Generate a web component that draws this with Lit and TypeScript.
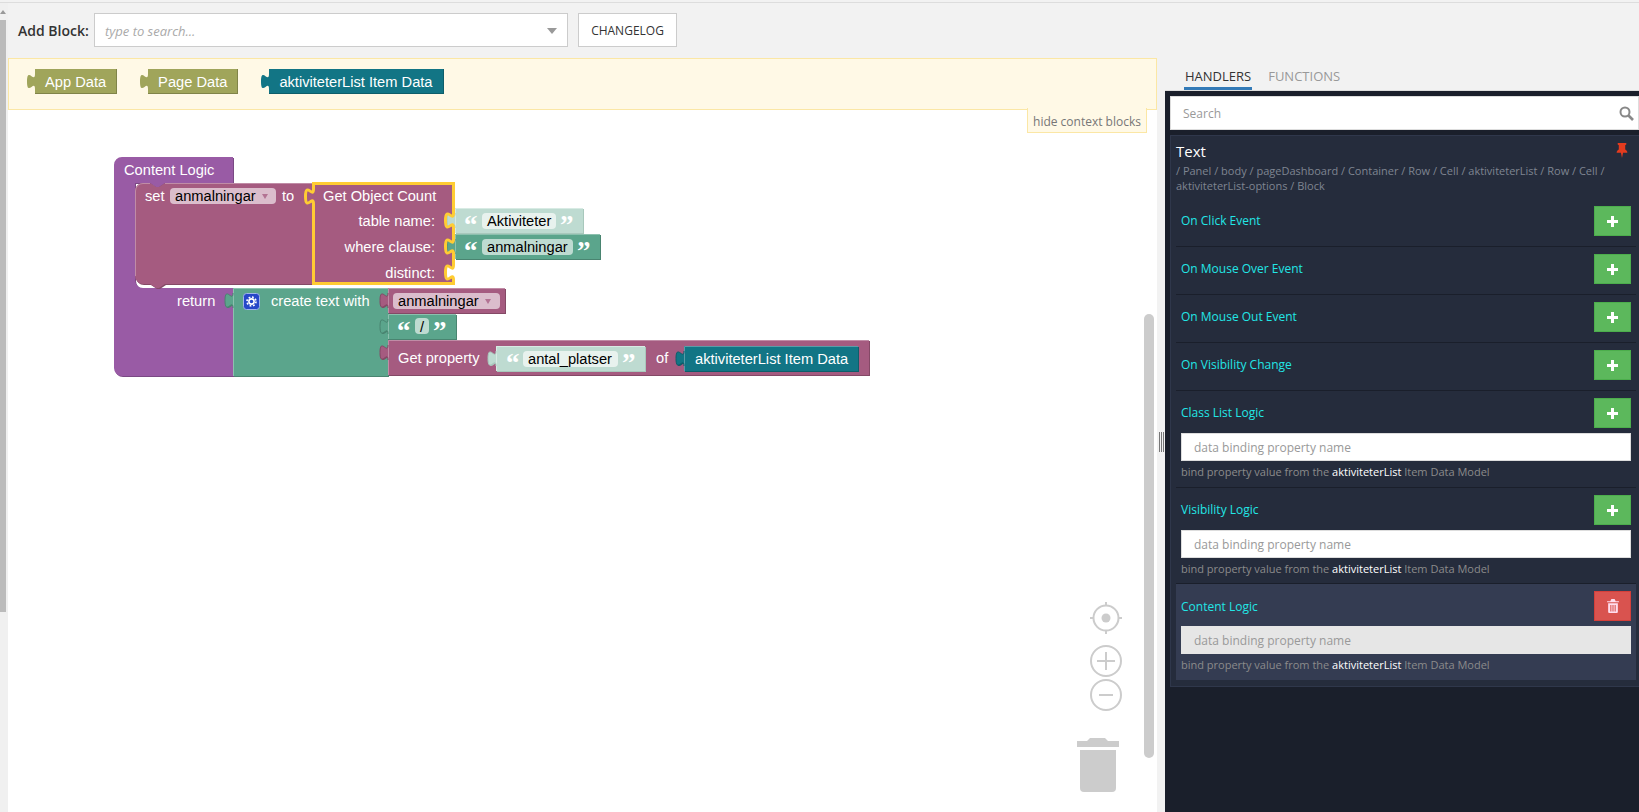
import { LitElement, html, svg, css } from "lit";
import { customElement } from "lit/decorators.js";

const C = {
  purple: "#995ba5", purpleD: "#7a4984",
  rose: "#a55b80", roseD: "#844966", roseL: "#c08ca6",
  green: "#5ba58c", greenD: "#498470", greenL: "#8cc0ae",
  pale: "#bedbd1", paleD: "#a8c8bc", paleL: "#d8ebe4",
  teal: "#127585", tealD: "#0e5e6a", tealL: "#5a9ca8",
};

type Shade = [string, string, string];
const ROSE: Shade = [C.rose, C.roseD, C.roseL];
const GREEN: Shade = [C.green, C.greenD, C.greenL];
const PALE: Shade = [C.pale, C.paleD, C.paleL];
const TEAL: Shade = [C.teal, C.tealD, C.tealL];

const tabDown = "v5 c0,10 -8,-8 -8,7.5 s8,-2.5 8,7.5";
const outPath = (x: number, y: number, w: number, h: number, inputs: number[] = []) =>
  `M${x},${y} H${x + w} ` +
  inputs.map((i) => `V${i} ${tabDown} `).join("") +
  `V${y + h} H${x} V${y + 20} c0,-10 -8,8 -8,-7.5 s8,2.5 8,-7.5 Z`;

const shape = (d: string, s: Shade, hl: string) => svg`
  <path d=${d} fill=${s[1]} transform="translate(1,1)"></path>
  <path d=${d} fill=${s[0]}></path>
  <path d=${hl} fill="none" stroke=${s[2]} stroke-width="1"></path>`;

const block = (x: number, y: number, w: number, h: number, s: Shade, inputs: number[] = []) => svg`
  ${shape(outPath(x, y, w, h, inputs), s, `M${x + 0.5},${y + h} V${y + 0.5} H${x + w}`)}
  <path d="M${x},${y + 20} c0,-10 -8,8 -8,-7.5 s8,2.5 8,-7.5" fill="none" stroke=${s[1]} stroke-width="1"></path>`;

const t = (x: number, y: number, s: string, cls = "w") => svg`<text x=${x} y=${y} class=${cls}>${s}</text>`;

const chip = (x: number, y: number, w: number, fill: string) =>
  svg`<rect x=${x} y=${y} width=${w} height="16" rx="4" fill=${fill}></rect>`;

const quotes = (x1: number, x2: number, base: number) => svg`
  <text x=${x1} y=${base} class="q">“</text>
  <text x=${x2} y=${base} class="q">”</text>`;

const arrow = (cx: number, cy: number) =>
  svg`<path d="M${cx - 3},${cy - 2} h6 l-3,5 z" fill=${C.rose} opacity="0.75"></path>`;

const purplePath =
  "M114,165 a8,8 0 0 1 8,-8 H233 V183 H165 l-6,4 -3,0 -6,-4 H135 V280 a8,8 0 0 0 8,8 H233 V376 H122 a8,8 0 0 1 -8,-8 Z";
const setPath =
  "M143,183 H150 l6,4 3,0 6,-4 H312 V284 H165 l-6,4 -3,0 -6,-4 H143 a8,8 0 0 1 -8,-8 V191 a8,8 0 0 1 8,-8 Z";
const getCountPath = `M313.5,183.5 H453.5 V208 ${tabDown} V234 ${tabDown} V260 ${tabDown} V283.5 H313.5 V204 c0,-10 -8,8 -8,-7.5 s8,2.5 8,-7.5 Z`;

const workspace = svg`
  <path d=${purplePath} fill=${C.purpleD} transform="translate(1,1)"></path>
  <path d=${purplePath} fill=${C.purple}></path>
  ${t(124, 175, "Content Logic")}
  ${t(177, 306, "return")}

  ${shape(setPath, ROSE, "M135.5,276 V191 a7.5,7.5 0 0 1 7.5,-7.5 H150 M165,183.5 H312")}
  ${t(145, 201, "set")}
  ${chip(170, 188, 106, "#dbbdcc")}
  ${t(175, 201, "anmalningar", "k")}
  ${arrow(265, 196)}
  ${t(282, 201, "to")}

  ${block(233, 288, 155, 88, GREEN, [288, 314, 340])}
  <rect x="243.5" y="293.5" width="16" height="16" rx="3" fill="#2648c8" stroke="#9fb4ea"></rect>
  <circle cx="251.5" cy="301.5" r="2.6" fill="none" stroke="#fff" stroke-width="1.6"></circle>
  <circle cx="251.5" cy="301.5" r="4.5" fill="none" stroke="#fff" stroke-width="1.6" stroke-dasharray="1.8 1.73"></circle>
  ${t(271, 306, "create text with")}

  ${block(388, 288, 117, 25, ROSE)}
  ${chip(393, 293, 107, "#dbbdcc")}
  ${t(398, 306, "anmalningar", "k")}
  ${arrow(488, 301)}

  ${block(388, 314, 68, 25, GREEN)}
  ${quotes(397, 433, 340)}
  ${chip(415, 318, 14, C.pale)}
  ${t(420, 332, "/", "k")}

  ${block(388, 340, 481, 35, ROSE)}
  ${t(398, 363, "Get property")}
  ${block(496, 346, 149, 25, PALE)}
  ${quotes(506, 622, 372)}
  ${chip(523, 351, 95, "#e8f2ee")}
  ${t(528, 364, "antal_platser", "k")}
  ${t(656, 363, "of")}
  ${block(684, 346, 174, 25, TEAL)}
  ${t(695, 364, "aktiviteterList Item Data")}

  ${block(455, 208, 128, 25, PALE)}
  ${quotes(464, 560, 234)}
  ${chip(482, 213, 74, "#e8f2ee")}
  ${t(487, 226, "Aktiviteter", "k")}

  ${block(455, 234, 145, 25, GREEN)}
  ${quotes(464, 577, 260)}
  ${chip(482, 239, 91, C.pale)}
  ${t(487, 252, "anmalningar", "k")}

  <path d=${getCountPath} fill=${C.rose} stroke="#fc3" stroke-width="3"></path>
  ${t(323, 201, "Get Object Count")}
  ${t(435, 226, "table name:", "w e")}
  ${t(435, 252, "where clause:", "w e")}
  ${t(435, 278, "distinct:", "w e")}

  <g fill="none" stroke="#ccc" stroke-width="2">
    <circle cx="1106" cy="618" r="12.5"></circle>
    <path d="M1106,602 v4 M1106,630 v4 M1090,618 h4 M1118,618 h4"></path>
    <circle cx="1106" cy="661" r="15"></circle>
    <path d="M1097,661 h18 M1106,652 v18"></path>
    <circle cx="1106" cy="695" r="15"></circle>
    <path d="M1099,695 h14"></path>
  </g>
  <circle cx="1106" cy="618" r="4.5" fill="#ccc"></circle>
  <path d="M1077,741 H1087 L1090,738 H1105 L1108,741 H1119 V747 H1077 Z" fill="#ccc"></path>
  <path d="M1080,750 H1116 V788 a4,4 0 0 1 -4,4 H1084 a4,4 0 0 1 -4,-4 Z" fill="#ccc"></path>
`;

const tabChip = "M8,20 c0,-10 -8,8 -8,-7.5 s8,2.5 8,-7.5 z";

@customElement("app-root")
export class AppRoot extends LitElement {
  static styles = css`
    :host { display: block; height: 100vh; overflow: hidden; background: #f2f2f2; font-family: "Open Sans", sans-serif; }
    * { box-sizing: border-box; }
    .page { height: 100%; border-top: 1px solid #ddd; margin-top: 2px; display: grid; grid-template-columns: 8px 1149px 8px 1fr; }
    .vtrack { background: #f0f0f0; display: flex; flex-direction: column; align-items: flex-start; }
    .vtrack .up { width: 6px; height: 17px; display: flex; align-items: center; justify-content: center; }
    .vtrack .thumb { width: 6px; height: 592px; background: #bbb; }
    .editor { display: flex; flex-direction: column; min-height: 0; }
    .toolbar { height: 55px; flex: none; display: flex; align-items: flex-start; padding: 10px 0 0 10px; }
    .add { width: 76px; flex: none; font-size: 14px; font-weight: 600; color: #333; line-height: 36px; }
    .select { width: 474px; height: 34px; background: #fff; border: 1px solid #ccc; display: flex; align-items: center; justify-content: space-between; padding: 1px 10px 0; margin-right: 10px; }
    .select em { font-size: 13px; color: #aaa; }
    .caret { width: 0; height: 0; border-left: 5px solid transparent; border-right: 5px solid transparent; border-top: 6px solid #999; }
    .btn { width: 99px; height: 34px; background: #fff; border: 1px solid #ccc; font-size: 12px; color: #333; display: flex; align-items: center; justify-content: center; }
    .band { height: 52px; flex: none; position: relative; z-index: 1; background: #fff9e6; border: 1px solid #fbe7a5; display: flex; gap: 31px; padding: 10px 0 0 26px; }
    .hide { position: absolute; top: 100%; right: 9px; margin-top: -1px; width: 120px; height: 25px; padding-top: 3px; background: #fff9e6; border: 1px solid #fbe7a5; border-top: 0; font-size: 12px; color: #777; display: flex; align-items: center; justify-content: center; }
    .cb { position: relative; height: 25px; padding: 0 10px; color: #fff; font: 14.67px/27px "Liberation Sans", Arial, sans-serif; white-space: nowrap; border-right: 1px solid; border-bottom: 1px solid; }
    .cb svg { position: absolute; left: -8px; top: 0; overflow: visible; }
    .cb.olive { background: #a0a55b; border-color: #808449; }
    .cb.teal { background: #127585; border-color: #0e5e6a; }
    .canvas { flex: 1; position: relative; background: #fff; min-height: 0; overflow: hidden; }
    .canvas svg { display: block; }
    .canvas text { font: 14.67px "Liberation Sans", Arial, sans-serif; }
    .canvas text.w { fill: #fff; }
    .canvas text.k { fill: #000; }
    .canvas text.e { text-anchor: end; }
    .canvas text.q { font: bold 27px "Liberation Serif", serif; fill: #fff; }
    .vbar { position: absolute; right: 3px; top: 204px; width: 10px; height: 444px; border-radius: 5px; background: #ccc; }
    .gutter { display: flex; justify-content: center; padding-top: 429px; }
    .grip { width: 5px; height: 20px; background: repeating-linear-gradient(90deg, #777 0 1px, transparent 1px 2px); }
    .right { display: flex; flex-direction: column; min-width: 0; min-height: 0; overflow: hidden; }
    .tabs { height: 87px; flex: none; display: flex; gap: 15px; padding: 63px 0 0 19px; font-size: 13px; }
    .tab { height: 24px; padding: 0 1px; color: #999; line-height: 20px; }
    .tab.on { color: #333; border-bottom: 3px solid #337ab7; }
    .panel { flex: 1; background: #1a1f2b; border-top: 1px solid #ddd; padding: 5px 0 0 5px; min-height: 0; }
    .search { height: 34px; background: #fff; border: 1px solid #ddd; display: flex; align-items: center; justify-content: space-between; padding: 0 4px 0 12px; font-size: 12px; color: #999; }
    .card { width: 472px; margin-top: 5px; background: #252c3c; border: 1px solid #2f374b; padding: 4px 5px 6px; }
    .title { display: flex; justify-content: space-between; align-items: center; height: 21px; padding-right: 8px; color: #fff; font-size: 15px; }
    .path { font-size: 11px; line-height: 15px; color: #7f8591; margin-top: 2px; height: 36px; width: 440px; }
    .row { padding: 7px 5px 10px; border-bottom: 1px solid #1a1f2b; }
    .row.inp { padding-bottom: 6px; }
    .row.flush { padding-bottom: 5px; border-bottom: 0; }
    .row.sel { background: #343c52; border-top: 1px solid #1a1f2b; border-bottom: 0; padding-bottom: 6px; }
    .head { display: flex; justify-content: space-between; align-items: center; height: 30px; font-size: 12px; color: #22e6e6; }
    .row:not(.sel) .head span { margin-top: -2px; }
    .act { width: 37px; height: 30px; display: flex; align-items: center; justify-content: center; border: 1px solid #4cae4c; background: #5cb85c; }
    .act.del { border-color: #d43f3a; background: #d9534f; }
    .field { height: 28px; margin-top: 5px; background: #fff; border: 1px solid #ddd; font-size: 12px; color: #999; display: flex; align-items: center; padding-left: 12px; }
    .field.off { background: #e6e6e6; border-color: #e6e6e6; }
    .help { height: 18px; margin-top: 2px; font-size: 11px; line-height: 18px; color: #8b8b8b; white-space: nowrap; }
    .help b { font-weight: 400; color: #fff; }
  `;

  private plus() {
    return html`<svg width="11" height="11" viewBox="0 0 11 11"><path d="M4,0 h3 v4 h4 v3 h-4 v4 h-3 v-4 h-4 v-3 h4 z" fill="#fff"></path></svg>`;
  }

  private trash() {
    return html`<svg width="12" height="14" viewBox="0 0 11 13">
      <path d="M0,2 H3 L4,0 H7 L8,2 H11 V3 H0 Z" fill="#fde"></path>
      <path d="M1,4 H10 V12 a1,1 0 0 1 -1,1 H2 a1,1 0 0 1 -1,-1 Z M3,5.5 V11.5 H4 V5.5 Z M5,5.5 V11.5 H6 V5.5 Z M7,5.5 V11.5 H8 V5.5 Z" fill="#fde" fill-rule="evenodd"></path>
    </svg>`;
  }

  private row(label: string, cls = "", del = false) {
    const withInput = cls !== "";
    return html`<div class="row ${cls}">
      <div class="head"><span>${label}</span>
        <div class="act ${del ? "del" : ""}">${del ? this.trash() : this.plus()}</div>
      </div>
      ${withInput
        ? html`<div class="field ${del ? "off" : ""}">data binding property name</div>
            <div class="help">bind property value from the <b>aktiviteterList</b> Item Data Model</div>`
        : ""}
    </div>`;
  }

  private ctx(label: string, cls: string, fill: string) {
    return html`<div class="cb ${cls}"><svg width="8" height="25" viewBox="0 0 8 25"><path d=${tabChip} fill=${fill}></path></svg>${label}</div>`;
  }

  render() {
    return html`<div class="page">
      <div class="vtrack">
        <div class="up"><svg width="6" height="4" viewBox="0 0 6 4"><path d="M0,4 L3,0 L6,4 Z" fill="#999"></path></svg></div>
        <div class="thumb"></div>
      </div>
      <div class="editor">
        <div class="toolbar">
          <div class="add">Add Block:</div>
          <div class="select"><em>type to search...</em><span class="caret"></span></div>
          <div class="btn">CHANGELOG</div>
        </div>
        <div class="band">
          ${this.ctx("App Data", "olive", "#a0a55b")}
          ${this.ctx("Page Data", "olive", "#a0a55b")}
          ${this.ctx("aktiviteterList Item Data", "teal", "#127585")}
          <div class="hide">hide context blocks</div>
        </div>
        <div class="canvas">
          <svg width="1149" height="702" viewBox="8 110 1149 702">${workspace}</svg>
          <div class="vbar"></div>
        </div>
      </div>
      <div class="gutter"><div class="grip"></div></div>
      <div class="right">
        <div class="tabs"><div class="tab on">HANDLERS</div><div class="tab">FUNCTIONS</div></div>
        <div class="panel">
          <div class="search">Search
            <svg width="15" height="15" viewBox="0 0 15 15"><circle cx="6" cy="6" r="4.5" fill="none" stroke="#888" stroke-width="2"></circle><path d="M9.5,9.5 L14,14" stroke="#888" stroke-width="2.6"></path></svg>
          </div>
          <div class="card">
            <div class="title">Text
              <svg width="12" height="15" viewBox="0 0 10 14"><path d="M1,0 H9 V1.5 L8,2 V6 C9,6.5 10,7.5 10,9 H6 L5,14 L4,9 H0 C0,7.5 1,6.5 2,6 V2 L1,1.5 Z" fill="#e33b1e"></path></svg>
            </div>
            <div class="path">/ Panel / body / pageDashboard / Container / Row / Cell / aktiviteterList / Row / Cell / aktiviteterList-options / Block</div>
            ${this.row("On Click Event")}
            ${this.row("On Mouse Over Event")}
            ${this.row("On Mouse Out Event")}
            ${this.row("On Visibility Change")}
            ${this.row("Class List Logic", "inp")}
            ${this.row("Visibility Logic", "flush")}
            ${this.row("Content Logic", "sel", true)}
          </div>
        </div>
      </div>
    </div>`;
  }
}
